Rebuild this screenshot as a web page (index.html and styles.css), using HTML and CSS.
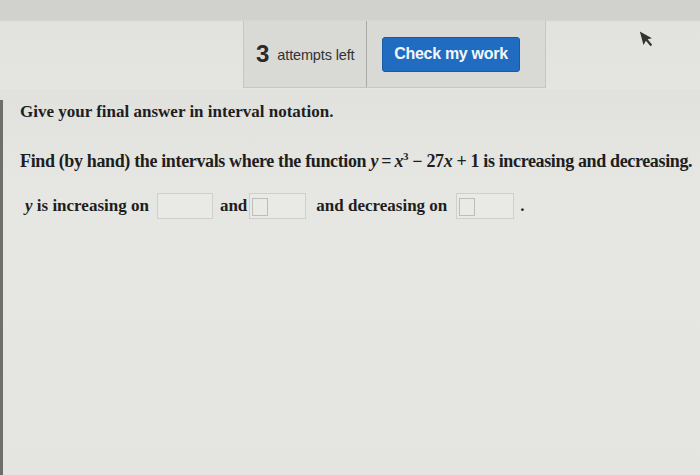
FILE: index.html
```html
<!DOCTYPE html>
<html>
<head>
<meta charset="utf-8">
<link rel="stylesheet" href="styles.css">
</head>
<body>
<div class="page">
  <div class="topband">
    <div class="panel">
      <div class="cell attempts"><span class="num">3</span><span class="lbl">attempts left</span></div>
      <div class="cell check"><button class="btn">Check my work</button></div>
    </div>
    <svg class="cursor" width="14" height="20" viewBox="0 0 14 20"><path d="M2 1 L2 15 L5.5 11.5 L8.5 18 L10.5 17 L7.5 10.5 L12 10.5 Z" fill="#333"/></svg>
  </div>
  <div class="content">
    <p class="q1">Give your final answer in interval notation.</p>
    <p class="q2">Find (by hand) the intervals where the function <i>y</i>&thinsp;=&thinsp;<i>x</i><sup>3</sup> − 27<i>x</i> + 1 is increasing and decreasing.</p>
    <div class="answer">
      <span class="t"><i>y</i> is increasing on</span>
      <span class="box b1"></span>
      <span class="t and">and</span>
      <span class="box b2"><span class="inner"></span></span>
      <span class="t dec">and decreasing on</span>
      <span class="box b3"><span class="inner"></span></span>
      <span class="t dot">.</span>
    </div>
  </div>
</div>
</body>
</html>
```
FILE: styles.css
```css
html, body {
  margin: 0;
  padding: 0;
  height: 100%;
}
body {
  background: #e3e3df;
  font-family: "Liberation Serif", "Times New Roman", serif;
  color: #1e1e1e;
  overflow: hidden;
}
.page {
  width: 700px;
  height: 475px;
  background: linear-gradient(180deg, #dcdcd8 0%, #e6e6e2 40%, #e4e4e0 100%);
}
.topband {
  height: 90px;
  position: relative;
  background: linear-gradient(180deg, #d1d1cd 0px, #d1d1cd 20px, #e2e2de 22px, #e4e4e0 90px);
  display: flex;
  align-items: flex-start;
}
.panel {
  margin-left: 243px;
  margin-top: 21px;
  height: 66px;
  display: flex;
  background: #d9d9d5;
  border: 1px solid #c6c6c2;
  border-top: none;
}
.cell {
  display: flex;
  align-items: center;
}
.attempts {
  width: 123px;
  border-right: 1px solid #a9a9a5;
  padding-left: 12px;
  box-sizing: border-box;
  gap: 8px;
}
.num {
  font-family: "Liberation Sans", Arial, sans-serif;
  font-weight: bold;
  font-size: 24px;
  color: #2a2a2a;
}
.lbl {
  font-family: "Liberation Sans", Arial, sans-serif;
  font-size: 14.5px;
  letter-spacing: -0.15px;
  color: #333;
  margin-top: 2px;
}
.check {
  width: 178px;
  padding-left: 15px;
  box-sizing: border-box;
}
.btn {
  width: 138px;
  height: 35px;
  background: #1f6cc0;
  color: #f4f7fb;
  border: 1px solid #195aa2;
  border-radius: 3px;
  font-family: "Liberation Sans", Arial, sans-serif;
  font-weight: bold;
  font-size: 16px;
  letter-spacing: -0.3px;
  padding: 0;
}
.cursor {
  position: absolute;
  left: 640px;
  top: 29px;
  transform: rotate(-15deg);
}
.content {
  border-left: 3px solid #6e6e6b;
  height: 385px;
  padding-left: 17px;
  font-weight: bold;
}
.q1 {
  margin: 10px 0 0 0;
  font-size: 17px;
  line-height: 24px;
}
.q2 {
  margin: 25px 0 0 0;
  font-size: 18px;
  line-height: 24px;
  letter-spacing: -0.36px;
  white-space: nowrap;
}
.q2 sup {
  font-size: 11px;
  line-height: 0;
}
.answer {
  margin-top: 20px;
  display: flex;
  align-items: center;
  font-size: 17px;
  padding-left: 5px;
}
.box {
  display: inline-block;
  width: 56px;
  height: 26px;
  border: 1px solid #cfcfcb;
  background: #e9e9e6;
  box-sizing: border-box;
  position: relative;
}
.inner {
  position: absolute;
  left: 2px;
  top: 4px;
  width: 16px;
  height: 18px;
  border: 1px solid #bdbdb9;
  box-sizing: border-box;
}
.b1 { margin-left: 8px; }
.and { margin-left: 7px; }
.b2 { margin-left: 2px; width: 57px; }
.dec { margin-left: 10px; }
.b3 { margin-left: 9px; width: 58px; }
.dot { margin-left: 6px; }
```
